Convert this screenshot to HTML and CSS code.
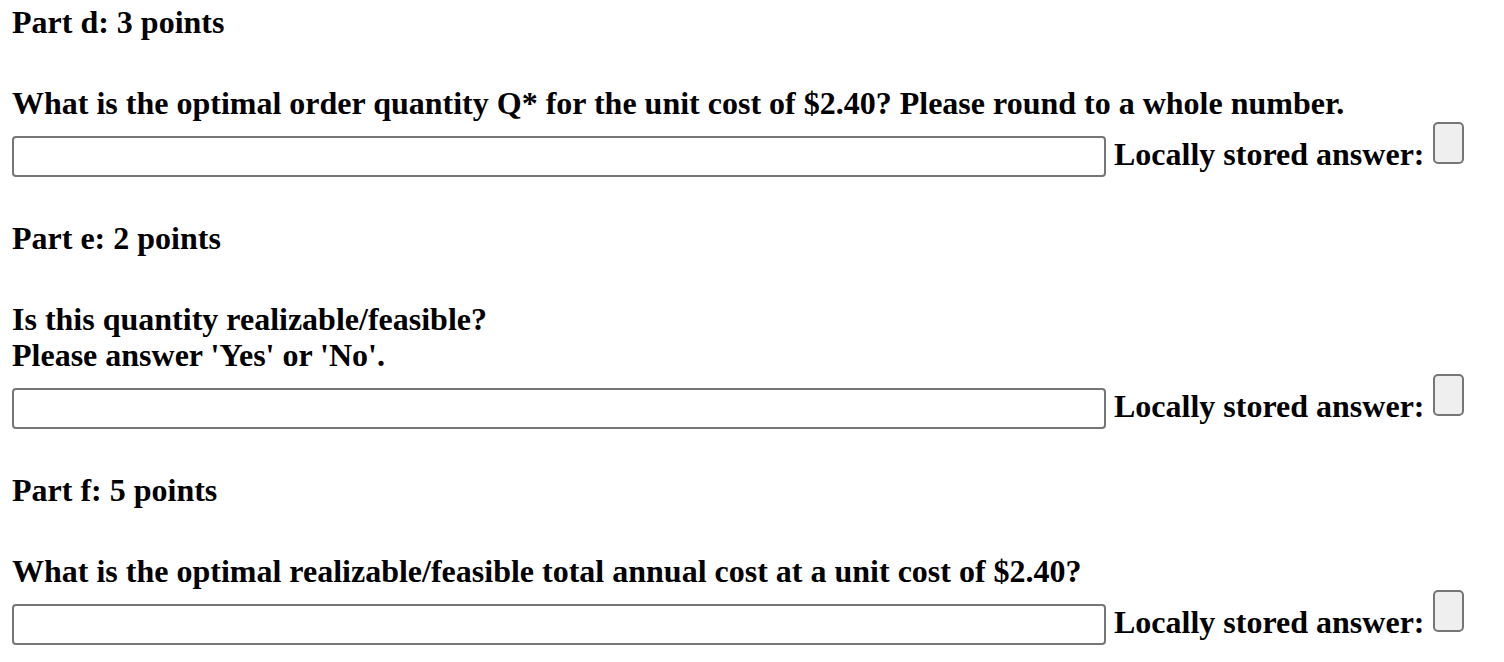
FILE: index.html
```html
<!DOCTYPE html>
<html>
<head>
<meta charset="utf-8">
<link rel="stylesheet" href="styles.css">
</head>
<body>
<section class="part">
  <div class="part-title">Part d: 3 points</div>
  <div class="question">What is the optimal order quantity Q* for the unit cost of $2.40? Please round to a whole number.</div>
  <div class="answer-row">
    <input class="answer" type="text">
    <span class="stored">Locally stored answer:</span>
    <input class="stored-box" type="checkbox">
  </div>
</section>
<section class="part">
  <div class="part-title">Part e: 2 points</div>
  <div class="question">Is this quantity realizable/feasible?<br>Please answer 'Yes' or 'No'.</div>
  <div class="answer-row">
    <input class="answer" type="text">
    <span class="stored">Locally stored answer:</span>
    <input class="stored-box" type="checkbox">
  </div>
</section>
<section class="part">
  <div class="part-title">Part f: 5 points</div>
  <div class="question">What is the optimal realizable/feasible total annual cost at a unit cost of $2.40?</div>
  <div class="answer-row">
    <input class="answer" type="text">
    <span class="stored">Locally stored answer:</span>
    <input class="stored-box" type="checkbox">
  </div>
</section>
</body>
</html>
```
FILE: styles.css
```css
html, body {
  margin: 0;
  padding: 0;
  background: #fff;
}
body {
  padding: 4px 12px 0;
  font-family: "Liberation Serif", "Times New Roman", serif;
  font-weight: bold;
  font-size: 32px;
  line-height: 36px;
  color: #000;
}
.part-title {
  margin-bottom: 45px;
}
.answer-row {
  display: flex;
  align-items: flex-end;
  margin-top: 1px;
  margin-bottom: 43px;
}
.part:last-child .answer-row {
  margin-bottom: 0;
}
.answer {
  box-sizing: border-box;
  width: 1094px;
  height: 41px;
  margin: 0;
  border: 2px solid #767676;
  border-radius: 4px;
  background: #fff;
}
.stored {
  margin-left: 8px;
  margin-bottom: 5px;
}
.stored-box {
  appearance: none;
  -webkit-appearance: none;
  box-sizing: border-box;
  width: 31px;
  height: 42px;
  margin: 0 0 13px 9px;
  border: 2px solid #767676;
  border-radius: 5px;
  background: #efefef;
}
```
